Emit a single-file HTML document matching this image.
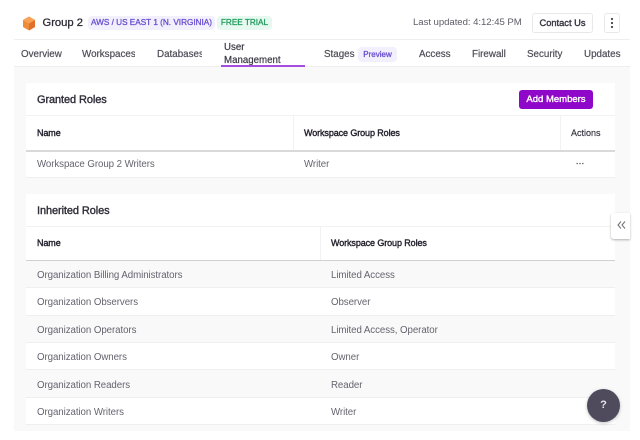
<!DOCTYPE html>
<html><head><meta charset="utf-8">
<style>
html,body{margin:0;padding:0;background:#fff;width:640px;height:440px;overflow:hidden;font-family:"Liberation Sans",sans-serif}
.a{position:absolute;white-space:nowrap}
.r{position:absolute;left:26px;width:589px;box-sizing:border-box}
.t{font-size:9.7px;letter-spacing:-.06px;color:#66636f;line-height:14px}
.h{font-size:9px;letter-spacing:-.1px;color:#26232e;-webkit-text-stroke:.4px #26232e;line-height:14px}
.n{font-size:9.8px;color:#504d58;-webkit-text-stroke:.2px #504d58;line-height:14px;top:48px}
.st{font-size:11px;letter-spacing:-.1px;color:#33303b;-webkit-text-stroke:.4px #33303b;line-height:16px}
.badge{position:absolute;border-radius:4px;font-size:8.2px;line-height:14px;text-align:center;white-space:nowrap}
</style></head><body>
<div class="a" style="left:14px;top:67px;width:616px;height:364px;background:#f9f9f9"></div>
<div class="a" style="left:14px;top:39px;width:616px;height:1px;background:#eeeeee"></div>
<div class="a" style="left:14px;top:66px;width:616px;height:1px;background:#eeeeee"></div>

<svg class="a" style="left:22px;top:16px" width="14" height="15" viewBox="0 0 14 15"><path d="M7 .5L13 4V11L7 14.5L1 11V4Z" fill="#f08a3c"/><path d="M7 7.5L13 4V11L7 14.5Z" fill="#e0702a"/><path d="M7 .5L13 4L7 7.5L1 4Z" fill="#f7a257"/></svg>
<div class="a" style="left:42.5px;top:15px;font-size:11.2px;line-height:16px;color:#2f2c37;-webkit-text-stroke:.3px #2f2c37">Group 2</div>
<div class="badge" style="left:88px;top:16px;width:127px;height:14px;background:#f3f0fd;color:#6a4fd0;-webkit-text-stroke:.3px #6a4fd0">AWS / US EAST 1 (N. VIRGINIA)</div>
<div class="badge" style="left:217px;top:16px;width:55px;height:14px;background:#e6f8ef;color:#1d9a5b;-webkit-text-stroke:.3px #1d9a5b">FREE TRIAL</div>
<div class="a" style="left:413px;top:15px;font-size:9.6px;letter-spacing:-.05px;line-height:16px;color:#5f5c67">Last updated: 4:12:45 PM</div>
<div class="a" style="left:532px;top:13px;width:61px;height:20px;box-sizing:border-box;border:1px solid #e8e8e8;border-radius:3px;text-align:center;font-size:9.3px;-webkit-text-stroke:.4px #3a3742;line-height:18px;color:#3a3742">Contact Us</div>
<div class="a" style="left:604px;top:13px;width:16px;height:20px;box-sizing:border-box;border:1px solid #e8e8e8;border-radius:3px"></div>
<svg class="a" style="left:604px;top:13px" width="16" height="20"><circle cx="8" cy="6" r="1.1" fill="#444"/><circle cx="8" cy="10" r="1.1" fill="#444"/><circle cx="8" cy="14" r="1.1" fill="#444"/></svg>

<div class="a n" style="left:21px">Overview</div>
<div class="a n" style="left:82px;width:53px;overflow:hidden">Workspaces</div>
<div class="a n" style="left:157px;width:45px;overflow:hidden">Databases</div>
<div class="a" style="left:224px;top:40.5px;font-size:9.7px;-webkit-text-stroke:.2px #3a3742;line-height:13.5px;color:#3a3742">User<br>Management</div>
<div class="a" style="left:221px;top:65px;width:84px;height:2px;background:#a64de0"></div>
<div class="a n" style="left:324px">Stages</div>
<div class="badge" style="left:358px;top:47px;width:39px;height:15px;background:#f3f0fd;color:#6a4fd0;-webkit-text-stroke:.3px #6a4fd0;line-height:15px;font-size:8px">Preview</div>
<div class="a n" style="left:419px">Access</div>
<div class="a n" style="left:472px">Firewall</div>
<div class="a n" style="left:527px">Security</div>
<div class="a n" style="left:584px">Updates</div>

<!-- Granted -->
<div class="r" style="top:83px;height:94px;background:#fff"></div>
<div class="a st" style="left:37px;top:92px">Granted Roles</div>
<div class="a" style="left:519px;top:90px;width:74px;height:19px;background:#8f07c9;border-radius:3px;color:#fff;font-size:9.5px;-webkit-text-stroke:.35px #fff;line-height:19px;text-align:center">Add Members</div>
<div class="r" style="top:115px;height:1px;background:#f2f2f2"></div>
<div class="r" style="top:150px;height:1.5px;background:#d9d9d9"></div>
<div class="r" style="top:177px;height:1px;background:#efefef"></div>
<div class="a" style="left:293px;top:116px;width:1px;height:34px;background:#f2f2f2"></div>
<div class="a" style="left:560px;top:116px;width:1px;height:34px;background:#f2f2f2"></div>
<div class="a h" style="left:37px;top:126px">Name</div>
<div class="a h" style="left:304px;top:126px">Workspace Group Roles</div>
<div class="a" style="left:571px;top:126px;font-size:9px;line-height:14px;color:#3a3742;-webkit-text-stroke:.2px #3a3742">Actions</div>
<div class="a t" style="left:37px;top:158px">Workspace Group 2 Writers</div>
<div class="a t" style="left:304px;top:158px">Writer</div>
<svg class="a" style="left:576px;top:162px" width="9" height="3"><circle cx="1.2" cy="1.5" r=".8" fill="#666"/><circle cx="4" cy="1.5" r=".8" fill="#666"/><circle cx="6.8" cy="1.5" r=".8" fill="#666"/></svg>

<!-- Inherited -->
<div class="r" style="top:194px;height:67px;background:#fff"></div>
<div class="a st" style="left:37px;top:203px">Inherited Roles</div>
<div class="r" style="top:226px;height:1px;background:#f2f2f2"></div>
<div class="r" style="top:260px;height:1px;background:#cfcfd4"></div>
<div class="a" style="left:320px;top:227px;width:1px;height:33px;background:#f2f2f2"></div>
<div class="a h" style="left:37px;top:236px">Name</div>
<div class="a h" style="left:331px;top:236px">Workspace Group Roles</div>

<div class="r" style="top:287px;height:1px;background:#efefef"></div>
<div class="r" style="top:288px;height:27px;background:#fff"></div>
<div class="r" style="top:315px;height:1px;background:#efefef"></div>
<div class="r" style="top:342px;height:1px;background:#efefef"></div>
<div class="r" style="top:343px;height:27px;background:#fff"></div>
<div class="r" style="top:369px;height:1px;background:#efefef"></div>
<div class="r" style="top:397px;height:1px;background:#efefef"></div>
<div class="r" style="top:398px;height:26px;background:#fff"></div>
<div class="r" style="top:424px;height:1px;background:#efefef"></div>

<div class="a t" style="left:37px;top:269px">Organization Billing Administrators</div><div class="a t" style="left:331px;top:269px">Limited Access</div>
<div class="a t" style="left:37px;top:296px">Organization Observers</div><div class="a t" style="left:331px;top:296px">Observer</div>
<div class="a t" style="left:37px;top:324px">Organization Operators</div><div class="a t" style="left:331px;top:324px">Limited Access, Operator</div>
<div class="a t" style="left:37px;top:351px">Organization Owners</div><div class="a t" style="left:331px;top:351px">Owner</div>
<div class="a t" style="left:37px;top:379px">Organization Readers</div><div class="a t" style="left:331px;top:379px">Reader</div>
<div class="a t" style="left:37px;top:406px">Organization Writers</div><div class="a t" style="left:331px;top:406px">Writer</div>

<!-- side toggle -->
<div class="a" style="left:611px;top:213px;width:19px;height:26px;background:#fff;border-radius:3px 0 0 3px;box-shadow:0 1px 2px rgba(0,0,0,.3)"></div>
<svg class="a" style="left:617px;top:221px" width="9" height="8" fill="none" stroke="#6b6b73" stroke-width="1"><path d="M4 .5L1 4l3 3.5M8 .5L5 4l3 3.5"/></svg>
<!-- help -->
<div class="a" style="left:587px;top:389px;width:33px;height:33px;border-radius:50%;background:#4f4b5c;box-shadow:0 1px 3px rgba(0,0,0,.25);color:#e6e6ea;font-size:11px;font-weight:bold;line-height:33px;text-align:center">?</div>
</body></html>
